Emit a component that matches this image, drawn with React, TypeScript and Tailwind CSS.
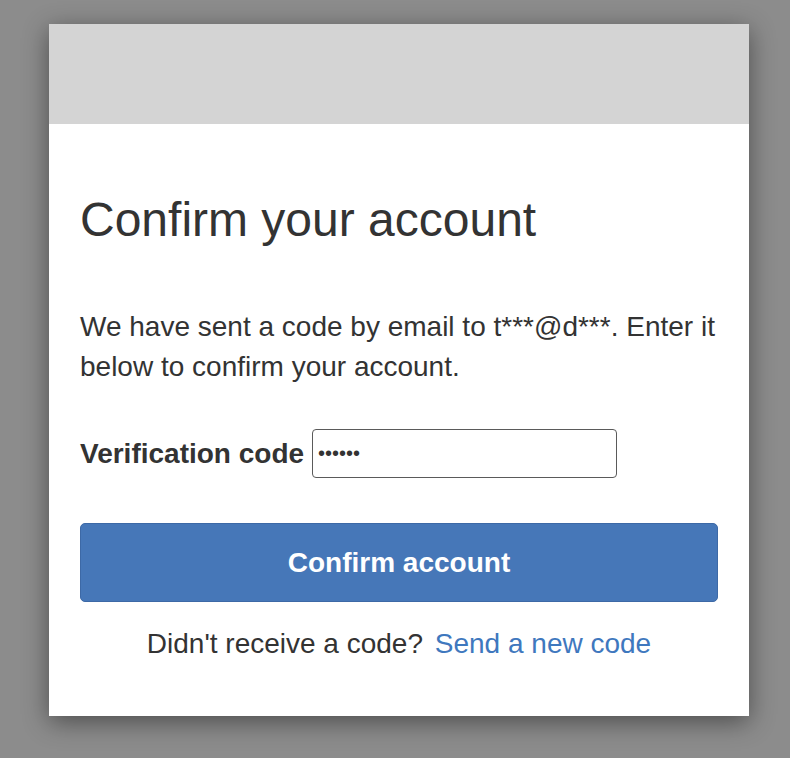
export default function App() {
  return (
    <div
      className="w-[790px] h-[758px] bg-[#8c8c8c] pt-[24px] pl-[49px] overflow-hidden"
      style={{ fontFamily: '"Liberation Sans", Arial, sans-serif' }}
    >
      <div className="w-[700px] h-[692px] bg-white shadow-[0_6px_24px_rgba(0,0,0,0.45)] flex flex-col">
        <div className="h-[100px] bg-[#d4d4d4]" />
        <div className="px-[31px] pt-[68px] flex flex-col">
          <h1 className="text-[48px] leading-[56px] text-[#333]">Confirm your account</h1>
          <p className="mt-[59px] text-[28px] leading-[40px] text-[#333]">
            We have sent a code by email to t***@d***. Enter it below to confirm your account.
          </p>
          <div className="mt-[42px] flex items-center gap-[8px]">
            <label htmlFor="code" className="text-[28px] font-bold text-[#333]">
              Verification code
            </label>
            <input
              id="code"
              type="password"
              defaultValue="123456"
              className="w-[305px] h-[49px] border-[1.5px] border-[#5a5a5a] rounded-[4px] px-[5px] text-[20px] text-[#333] outline-none"
            />
          </div>
          <button className="mt-[45px] h-[79px] w-full bg-[#4677b8] border border-[#3d69a6] rounded-[5px] text-white text-[28px] font-bold">
            Confirm account
          </button>
          <p className="mt-[26px] text-center text-[28px] leading-[32px] text-[#333]">
            Didn't receive a code?{" "}
            <a href="#" className="ml-[4px] text-[#3f78be]">
              Send a new code
            </a>
          </p>
        </div>
      </div>
    </div>
  );
}
